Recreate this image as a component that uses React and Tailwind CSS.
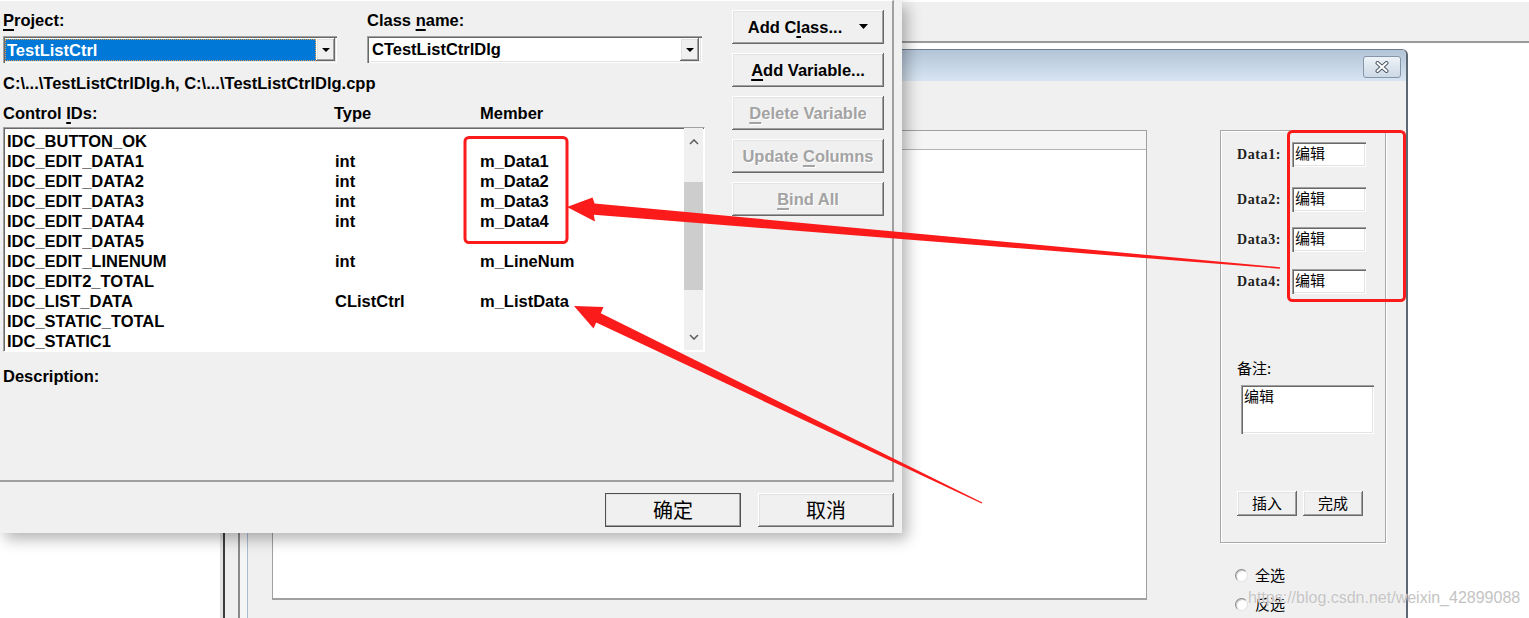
import React from 'react';

const cw = "font-['Liberation_Sans',Arial,sans-serif] font-bold text-[16.5px] leading-[20px] text-black";
const cjk = "font-['Noto_Sans_CJK_SC','Noto_Sans_CJK_JP',sans-serif]";
const raised = 'bg-[#f0f0f0] shadow-[inset_-1px_-1px_0_#696969,inset_1px_1px_0_#ffffff,inset_-2px_-2px_0_#a0a0a0,inset_2px_2px_0_#e3e3e3]';
const sunken = 'shadow-[inset_1px_1px_0_#a0a0a0,inset_2px_2px_0_#696969,inset_-1px_-1px_0_#ffffff,inset_-2px_-2px_0_#e3e3e3]';

const controls = [
  ['IDC_BUTTON_OK', '', ''],
  ['IDC_EDIT_DATA1', 'int', 'm_Data1'],
  ['IDC_EDIT_DATA2', 'int', 'm_Data2'],
  ['IDC_EDIT_DATA3', 'int', 'm_Data3'],
  ['IDC_EDIT_DATA4', 'int', 'm_Data4'],
  ['IDC_EDIT_DATA5', '', ''],
  ['IDC_EDIT_LINENUM', 'int', 'm_LineNum'],
  ['IDC_EDIT2_TOTAL', '', ''],
  ['IDC_LIST_DATA', 'CListCtrl', 'm_ListData'],
  ['IDC_STATIC_TOTAL', '', ''],
  ['IDC_STATIC1', '', ''],
];

const dataRows = [
  { label: 'Data1:', mt: 'mt-[11px]' },
  { label: 'Data2:', mt: 'mt-[20px]' },
  { label: 'Data3:', mt: 'mt-[15px]' },
  { label: 'Data4:', mt: 'mt-[17px]' },
];

function Tri({ w = 8, h = 4 }) {
  return (
    <svg width={w} height={h} viewBox={`0 0 ${w} ${h}`}>
      <polygon points={`0,0 ${w},0 ${w / 2},${h}`} fill="#000" />
    </svg>
  );
}

function U({ children }) {
  return <span className="underline underline-offset-[3px] decoration-[1.5px]">{children}</span>;
}

function WizButton({ children, disabled }) {
  return (
    <div
      className={`h-[34px] flex items-center justify-center ${raised} ${
        disabled ? 'text-[#a3a3a3] [text-shadow:1px_1px_0_#ffffff]' : ''
      }`}
    >
      {children}
    </div>
  );
}

function ScrollArrow({ up }) {
  return (
    <svg width="10" height="6" viewBox="0 0 10 6">
      <polyline
        points={up ? '1,5 5,1 9,5' : '1,1 5,5 9,1'}
        fill="none"
        stroke="#606060"
        strokeWidth="1.6"
      />
    </svg>
  );
}

function ClassWizard() {
  return (
    <div className={`absolute left-0 top-0 w-[902px] h-[533px] bg-[#f0f0f0] shadow-[5px_6px_14px_rgba(0,0,0,0.3)] flex flex-col ${cw}`}>
      <div className="h-[482px] w-[894px] border-t border-t-white border-r-2 border-b-2 border-r-[#a0a0a0] border-b-[#a0a0a0] flex">
        {/* left column */}
        <div className="w-[705px] pl-[3px] pt-[9px] flex flex-col">
          <div className="flex h-[20px]">
            <div className="w-[364px]">
              <U>P</U>roject:
            </div>
            <div>
              Class <U>n</U>ame:
            </div>
          </div>
          <div className="flex mt-[6px]">
            <div className={`w-[334px] h-[27px] bg-white ${sunken} p-[2px] flex`}>
              <div className="flex-1 mt-[1px] bg-[#0078d7] border border-dotted border-[#e8a050] text-white pl-[1px] leading-[20px]">
                TestListCtrl
              </div>
              <div className={`w-[19px] ${raised} flex items-center justify-center`}>
                <Tri />
              </div>
            </div>
            <div className={`ml-[30px] w-[335px] h-[27px] bg-white ${sunken} p-[2px] flex`}>
              <div className="flex-1 pl-[3px] leading-[23px]">CTestListCtrlDlg</div>
              <div className={`w-[19px] mr-[1px] ${raised} flex items-center justify-center`}>
                <Tri />
              </div>
            </div>
          </div>
          <div className="mt-[10px] h-[20px]">C:\...\TestListCtrlDlg.h, C:\...\TestListCtrlDlg.cpp</div>
          <div className="mt-[10px] h-[20px] grid grid-cols-[331px_146px_1fr]">
            <div>
              Control <U>I</U>Ds:
            </div>
            <div>Type</div>
            <div>Member</div>
          </div>
          <div className="mt-[4px] h-[225px] w-[702px] bg-white border border-t-[#a0a0a0] border-l-[#a0a0a0] border-r-white border-b-white shadow-[inset_1px_1px_0_#696969] flex">
            <div className="flex-1 pt-[3px] pl-[3px]">
              {controls.map(([id, type, member]) => (
                <div key={id} className="grid grid-cols-[328px_145px_1fr] h-[20px]">
                  <div>{id}</div>
                  <div>{type}</div>
                  <div>{member}</div>
                </div>
              ))}
            </div>
            <div className="w-[19px] mr-[1px] mb-[1px] bg-[#f0f0f0] flex flex-col">
              <div className="h-[28px] flex items-center justify-center">
                <ScrollArrow up />
              </div>
              <div className="h-[26px]" />
              <div className="h-[108px] bg-[#cdcdcd]" />
              <div className="flex-1" />
              <div className="h-[26px] flex items-center justify-center">
                <ScrollArrow />
              </div>
            </div>
          </div>
          <div className="mt-[14px] h-[20px]">Description:</div>
        </div>

        {/* right buttons */}
        <div className="ml-[27px] pt-[9px] w-[152px] flex flex-col gap-[9px]">
          <WizButton>
            <span>
              Add C<U>l</U>ass...
            </span>
            <span className="ml-[17px] mb-[1px]">
              <Tri w={9} h={5} />
            </span>
          </WizButton>
          <WizButton>
            <span>
              <U>A</U>dd Variable...
            </span>
          </WizButton>
          <WizButton disabled>
            <span>
              <U>D</U>elete Variable
            </span>
          </WizButton>
          <WizButton disabled>
            <span>
              Update <U>C</U>olumns
            </span>
          </WizButton>
          <WizButton disabled>
            <span>
              <U>B</U>ind All
            </span>
          </WizButton>
        </div>
      </div>

      {/* bottom buttons */}
      <div className={`flex justify-end gap-[17px] pr-[8px] pt-[11px] ${cjk} font-normal text-[20px]`}>
        <div className={`w-[136px] h-[34px] flex items-center justify-center ${raised} outline outline-1 outline-[#505050] -outline-offset-1`}>
          确定
        </div>
        <div className={`w-[136px] h-[34px] flex items-center justify-center ${raised}`}>取消</div>
      </div>
    </div>
  );
}

function EditBox({ className }) {
  return (
    <div className={`bg-white ${sunken} pl-[3px] pt-[2px] text-[15px] leading-[18px] text-black ${cjk} ${className}`}>
      编辑
    </div>
  );
}

function Radio({ label, className }) {
  return (
    <div className={`flex items-center h-[20px] ${className}`}>
      <div className="ml-[15px] w-[13px] h-[13px] rounded-full bg-white border border-t-[#8a8a8a] border-l-[#8a8a8a] border-r-[#e0e0e0] border-b-[#e0e0e0] shadow-[inset_1px_1px_0_#c8c8c8]" />
      <span className={`ml-[7px] text-[15px] text-black ${cjk}`}>{label}</span>
    </div>
  );
}

function MfcDialog() {
  return (
    <div className="absolute left-[247px] top-[49px] w-[1161px] h-[580px] border-t border-t-[#707d8c] border-l border-l-[#a9bcd0] border-r-2 border-r-[#5d6875] rounded-tr-[6px] overflow-hidden flex flex-col bg-[#f0f0f0]">
      <div className="h-[31px] bg-gradient-to-b from-[#b3c4d7] to-[#d8e5f2] flex justify-end">
        <div className="mt-[6px] mr-[5px] w-[38px] h-[22px] rounded-[3px] border border-[#8795a8] bg-gradient-to-b from-[#eef3f8] to-[#ccd9e6] flex items-center justify-center">
          <svg width="16" height="12" viewBox="0 0 16 12">
            <path d="M3.5 2 L12.5 10 M12.5 2 L3.5 10" stroke="#4f5a68" strokeWidth="4" strokeLinecap="round" />
            <path d="M3.5 2 L12.5 10 M12.5 2 L3.5 10" stroke="#ffffff" strokeWidth="2" strokeLinecap="round" />
          </svg>
        </div>
      </div>
      <div className="flex-1 flex pl-[24px] pt-[49px]">
        {/* list control */}
        <div className="w-[875px] h-[470px] bg-white border border-[#a0a0a0] border-b-2 flex flex-col">
          <div className="h-[19px] bg-[#f5f5f5] border-b border-[#b4b4b4]" />
        </div>
        {/* right side */}
        <div className="ml-[73px] flex flex-col">
          <div className="w-[166px] h-[413px] border border-[#a8a8a8] shadow-[1px_1px_0_#ffffff,inset_1px_1px_0_#ffffff] flex flex-col">
            {dataRows.map((r) => (
              <div key={r.label} className={`flex items-center h-[25px] ${r.mt}`}>
                <div className="pl-[16px] w-[71px] font-['Liberation_Serif',serif] text-[14px] font-bold tracking-[0.6px] text-[#222]">
                  {r.label}
                </div>
                <EditBox className="w-[74px] h-[25px]" />
              </div>
            ))}
            <div className={`mt-[64px] pl-[16px] h-[20px] leading-[20px] text-[15px] text-black ${cjk}`}>备注:</div>
            <EditBox className="mt-[7px] ml-[20px] w-[133px] h-[49px]" />
            <div className={`mt-[57px] ml-[16px] flex gap-[6px] text-[15px] text-black ${cjk}`}>
              <div className={`w-[60px] h-[25px] flex items-center justify-center ${raised}`}>插入</div>
              <div className={`w-[60px] h-[25px] flex items-center justify-center ${raised}`}>完成</div>
            </div>
          </div>
          <Radio label="全选" className="mt-[22px]" />
          <Radio label="反选" className="mt-[9px]" />
        </div>
      </div>
    </div>
  );
}

function Annotations() {
  const red = '#fb1b1b';
  return (
    <svg className="absolute inset-0 pointer-events-none" width="1529" height="618" viewBox="0 0 1529 618">
      <rect x="465" y="137.5" width="102" height="105" rx="4" fill="none" stroke={red} strokeWidth="3" />
      <rect x="1288.5" y="131.5" width="116" height="169" rx="4" fill="none" stroke={red} strokeWidth="3" />
      <polygon
        fill={red}
        points="567,207 592.5,197.5 594.6,203.6 1280.1,267.3 1279.9,268.7 593.8,214.8 595,221.4"
      />
      <polygon
        fill={red}
        points="574,306 603.5,307 600.8,313.2 982.3,502.5 981.7,503.5 596.2,322.6 593.5,328.5"
      />
    </svg>
  );
}

export default function App() {
  return (
    <div className="relative w-[1529px] h-[618px] overflow-hidden bg-white">
      {/* window behind, top strip */}
      <div className="absolute left-0 top-0 w-[1529px] h-[43px] bg-[#f0f0f0] border-t-2 border-t-white border-b-2 border-b-[#9a9a9a]" />
      {/* frame lines of the editor window */}
      <div className="absolute left-[220px] top-[43px] h-[575px] flex">
        <div className="w-[3px] bg-[#e2e2e2]" />
        <div className="w-[2px] bg-[#3c3c3c]" />
        <div className="w-[13px] bg-[#efefef]" />
        <div className="w-[2px] bg-[#8a8a8a]" />
        <div className="w-[7px] bg-[#f5f5f5]" />
      </div>
      <MfcDialog />
      <div className="absolute left-[1248px] top-[588px] font-['Liberation_Sans',Arial,sans-serif] text-[16px] leading-[20px] text-[#c4c4c4] [text-shadow:0_0_1px_#ffffff]">
        https://blog.csdn.net/weixin_42899088
      </div>
      <ClassWizard />
      <Annotations />
    </div>
  );
}
